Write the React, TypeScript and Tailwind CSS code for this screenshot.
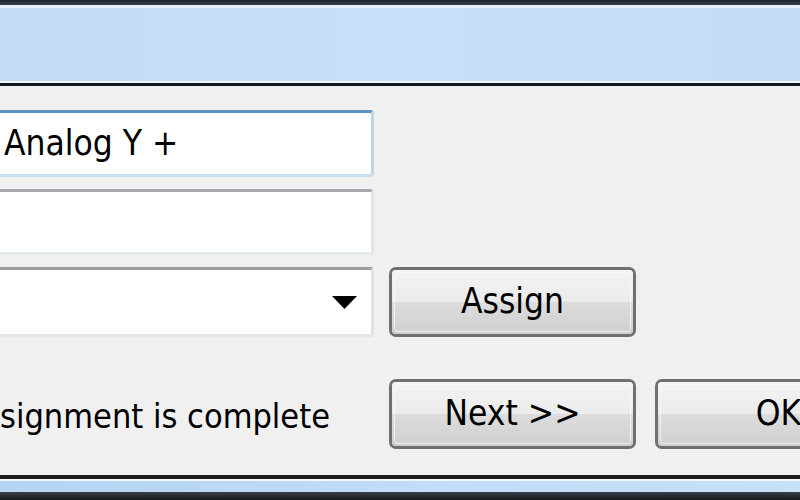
const font = { fontFamily: '"DejaVu Sans Condensed", "DejaVu Sans", sans-serif' };

function WinButton({ label, className = '' }: { label: string; className?: string }) {
  return (
    <button
      className={`relative h-[70px] w-[247px] shrink-0 overflow-hidden rounded-[7px] border-[3px] border-[#707070] text-[35px] text-black ${className}`}
      style={font}
    >
      <span className="absolute inset-0 flex flex-col">
        <span className="flex-1 bg-gradient-to-b from-[#f4f4f4] to-[#ebebeb]" />
        <span className="flex-1 bg-gradient-to-b from-[#dddddd] to-[#cfcfcf]" />
      </span>
      <span className="absolute inset-[2px] rounded-[4px] border border-[#fbfbfb]/70" />
      <span className="relative flex h-full items-center justify-center pb-[2px] whitespace-nowrap">{label}</span>
    </button>
  );
}

export default function App() {
  return (
    <div className="flex h-[500px] w-[800px] flex-col overflow-hidden bg-[#f0f0f0]" style={font}>
      {/* window title frame */}
      <div className="h-[5px] shrink-0 bg-gradient-to-b from-[#1c2228] to-[#3a4048]" />
      <div className="h-[3px] shrink-0 bg-[#e4eefa]" />
      <div className="h-[73px] shrink-0 bg-gradient-to-r from-[#c3dcf6] via-[#c6e0fa] to-[#c4dcf4]" />
      <div className="h-[2px] shrink-0 bg-[#eef5fc]" />
      <div className="h-[3px] shrink-0 bg-[#15191d]" />

      {/* dialog body */}
      <div className="flex flex-1 flex-col pt-[24px]">
        <div className="flex h-[67px] w-[384px] -ml-[10px] items-center rounded-[4px] border-[3px] border-[#b9d6ec] border-t-[#5c95c4] border-b-[#c8e2f2] bg-white pl-[11px] text-[35px] text-black">
          Analog Y +
        </div>
        <div className="mt-[12px] h-[66px] w-[384px] -ml-[10px] rounded-[4px] border-[3px] border-[#e2e4ea] border-t-[#a6a8ae] border-b-[#e4e9ee] bg-white" />
        <div className="mt-[12px] flex items-center">
          <div className="flex h-[70px] w-[384px] shrink-0 -ml-[10px] items-center justify-end rounded-[4px] border-[3px] border-[#e0e0e4] border-t-[#9c9c9c] border-b-[#e6e6e6] bg-white pr-[14px]">
            <svg width="25" height="13" viewBox="0 0 25 13">
              <path d="M0 0H25L12.5 13Z" fill="#000" />
            </svg>
          </div>
          <WinButton label="Assign" className="ml-[15px]" />
        </div>
        <div className="mt-[42px] flex items-center">
          <div className="w-[373px] shrink-0 whitespace-nowrap pt-[4px] text-[34px] leading-none text-black">
            signment is complete
          </div>
          <WinButton label="Next >>" className="ml-[16px]" />
          <WinButton label="OK" className="ml-[19px]" />
        </div>
      </div>

      {/* bottom frame */}
      <div className="h-[4px] shrink-0 bg-[#1a1a1a]" />
      <div className="h-[2px] shrink-0 bg-[#f2f7fc]" />
      <div className="h-[11px] shrink-0 bg-gradient-to-r from-[#b4d4f2] via-[#c0dcf6] to-[#c6e0f8]" />
      <div className="h-[8px] shrink-0 bg-gradient-to-b from-[#3a4048] to-[#15191d]" />
    </div>
  );
}
